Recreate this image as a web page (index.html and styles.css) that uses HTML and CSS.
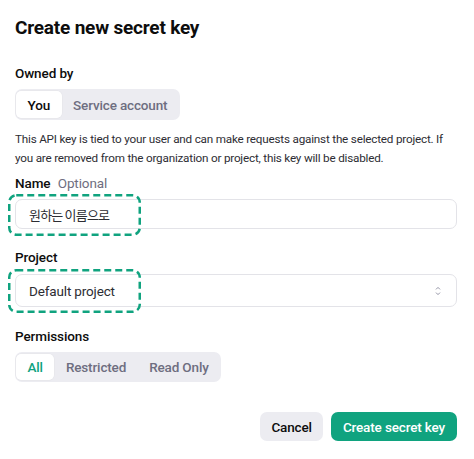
FILE: index.html
```html
<!DOCTYPE html>
<html lang="en">
<head>
<meta charset="utf-8">
<link rel="stylesheet" href="styles.css">
</head>
<body>
<div class="dialog">
  <h1 class="title">Create new secret key</h1>

  <div class="field owned">
    <div class="label">Owned by</div>
    <div class="segmented">
      <span class="seg active">You</span>
      <span class="seg">Service account</span>
    </div>
    <p class="desc">This API key is tied to your user and can make requests against the selected project. If you are removed from the organization or project, this key will be disabled.</p>
  </div>

  <div class="field name">
    <div class="label">Name <span class="opt">Optional</span></div>
    <div class="control-wrap">
      <div class="input"><span class="ko">원하는 이름으로</span></div>
      <svg class="mark mark-name" viewBox="0 0 133 42" width="133" height="42"><rect x="1.25" y="1.25" width="130.5" height="39.5" rx="7" /></svg>
    </div>
  </div>

  <div class="field project">
    <div class="label">Project</div>
    <div class="control-wrap">
      <div class="select">
        <span>Default project</span>
        <svg class="chev" viewBox="0 0 10 14" width="8" height="12"><path d="M2.5 5 L5 2.5 L7.5 5 M2.5 9 L5 11.5 L7.5 9" /></svg>
      </div>
      <svg class="mark mark-proj" viewBox="0 0 133 44" width="133" height="44"><rect x="1.25" y="1.25" width="130.5" height="41.5" rx="7" /></svg>
    </div>
  </div>

  <div class="field perms">
    <div class="label">Permissions</div>
    <div class="segmented">
      <span class="seg active green">All</span>
      <span class="seg">Restricted</span>
      <span class="seg">Read Only</span>
    </div>
  </div>

  <div class="actions">
    <span class="btn cancel">Cancel</span>
    <span class="btn primary">Create secret key</span>
  </div>
</div>
</body>
</html>
```

FILE: styles.css
```css
* { box-sizing: border-box; }
html, body { margin: 0; padding: 0; background: #fff; }
body {
  font-family: Roboto, "Noto Sans", "Noto Sans CJK KR", sans-serif;
  color: #0d0d0d;
  -webkit-font-smoothing: antialiased;
}
.dialog {
  padding: 15px 17px 0 15px;
  display: flex;
  flex-direction: column;
}
.title {
  margin: 0;
  font-size: 19px;
  font-weight: 700;
  line-height: 26px;
  letter-spacing: -0.2px;
}
.field { display: flex; flex-direction: column; }
.label {
  font-size: 13.5px;
  font-weight: 500;
  line-height: 18px;
  letter-spacing: -0.1px;
  color: #0d0d0d;
}
.opt { font-weight: 400; color: #6e6e80; margin-left: 4px; }
.owned { margin-top: 23px; }
.owned .label { margin-bottom: 7px; }
.segmented {
  display: inline-flex;
  align-self: flex-start;
  background: #ececf1;
  border-radius: 7px;
  padding: 2px 1px;
  height: 31px;
}
.seg {
  display: flex;
  align-items: center;
  padding: 0 11.5px;
  font-size: 13.5px;
  font-weight: 500;
  letter-spacing: -0.15px;
  color: #6e6e80;
  border-radius: 5px;
}
.seg.active {
  background: #fff;
  color: #0d0d0d;
  box-shadow: 0 0 0 0.5px #e3e3e8;
}
.seg.green { color: #10a37f; }
.desc {
  margin: 10px 0 0;
  max-width: 432px;
  font-size: 11.7px;
  line-height: 19px;
  color: #2d2d33;
  letter-spacing: -0.2px;
}
.name { margin-top: 6px; }
.name .label { margin-bottom: 7px; }
.control-wrap { position: relative; }
.input {
  height: 30px;
  border: 1px solid #e3e3e8;
  border-radius: 7px;
  display: flex;
  align-items: center;
  padding-left: 13px;
}
.ko {
  font-family: "Noto Sans CJK KR", sans-serif;
  font-size: 13px;
  letter-spacing: -0.8px;
  color: #2d2d33;
}
.project { margin-top: 19px; }
.project .label { margin-bottom: 8px; }
.select {
  height: 33px;
  border: 1px solid #e3e3e8;
  border-radius: 7px;
  display: flex;
  align-items: center;
  justify-content: space-between;
  padding: 0 14px 0 13px;
  font-size: 13.5px;
  letter-spacing: -0.15px;
  color: #2d2d33;
}
.chev { fill: none; stroke: #8e8ea0; stroke-width: 1.2; }
.mark { position: absolute; left: -7px; top: -5px; }
.mark rect { fill: none; stroke: #10a37f; stroke-width: 2.5; stroke-dasharray: 7 4; }
.perms { margin-top: 20px; }
.perms .label { margin-bottom: 7px; }
.perms .segmented { height: 30px; }
.actions {
  margin-top: 30px;
  display: flex;
  justify-content: flex-end;
  gap: 8px;
}
.btn {
  height: 29px;
  display: flex;
  align-items: center;
  padding: 0 12px;
  border-radius: 7px;
  font-size: 13.5px;
  font-weight: 500;
  letter-spacing: -0.15px;
}
.cancel { background: #ececf1; color: #0d0d0d; padding: 0 11px; }
.primary { background: #10a37f; color: #fff; }
```
